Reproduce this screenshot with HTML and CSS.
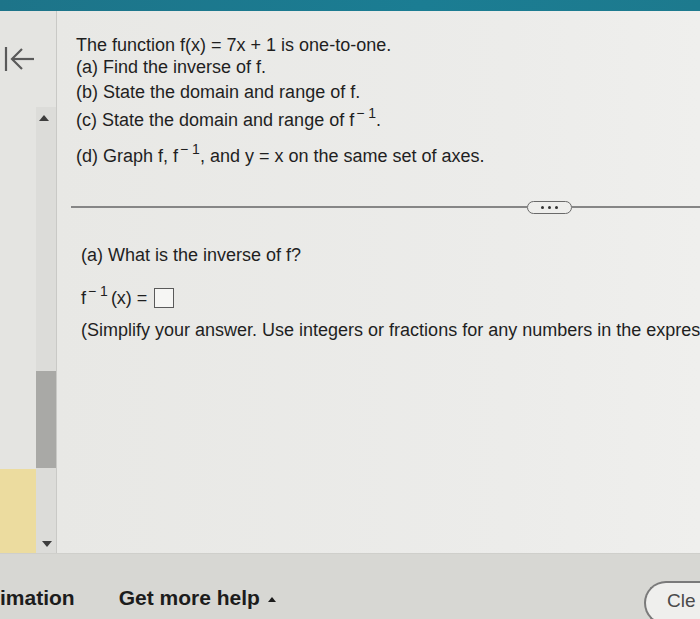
FILE: index.html
```html
<!DOCTYPE html>
<html>
<head>
<meta charset="utf-8">
<link rel="stylesheet" href="styles.css">
</head>
<body>
<div class="topbar"></div>
<div class="middle">
  <aside class="sidebar">
    <div class="side-col">
      <svg class="back-icon" width="32" height="28" viewBox="0 0 32 28">
        <line x1="3" y1="2" x2="3" y2="26" stroke="#5a5a5a" stroke-width="2.2"/>
        <line x1="9" y1="14" x2="31" y2="14" stroke="#5a5a5a" stroke-width="2.2"/>
        <polyline points="19,4 9,14 19,24" fill="none" stroke="#5a5a5a" stroke-width="2.2"/>
      </svg>
      <div class="side-spacer"></div>
      <div class="yellow"></div>
    </div>
    <div class="scroll">
      <div class="track">
        <div class="arrow-up"></div>
        <div class="thumb"></div>
        <div class="track-spacer"></div>
        <div class="arrow-down"></div>
      </div>
    </div>
  </aside>
  <main class="main">
    <div class="question">
      <div class="line">The function f(x) = 7x + 1 is one-to-one.</div>
      <div class="line">(a) Find the inverse of f.</div>
      <div class="line gap3">(b) State the domain and range of f.</div>
      <div class="line gap6">(c) State the domain and range of f<span class="sup">− 1</span>.</div>
      <div class="line gap14">(d) Graph f, f<span class="sup">− 1</span>, and y = x on the same set of axes.</div>
    </div>
    <div class="sep">
      <div class="sep-line left"></div>
      <div class="pill"><span></span><span></span><span></span></div>
      <div class="sep-line right"></div>
    </div>
    <div class="answer">
      <div class="line">(a) What is the inverse of f?</div>
      <div class="line eq">f<span class="sup">− 1</span>(x) = <span class="box"></span></div>
      <div class="line hint">(Simplify your answer. Use integers or fractions for any numbers in the express</div>
    </div>
  </main>
</div>
<div class="bottombar">
  <span class="bottom-link first">imation</span>
  <span class="bottom-link help">Get more help <span class="tri"></span></span>
  <span class="spacer"></span>
  <span class="clear-btn">Cle</span>
</div>
</body>
</html>
```

FILE: styles.css
```css
* { box-sizing: border-box; }
html, body {
  margin: 0;
  padding: 0;
  width: 700px;
  height: 619px;
  overflow: hidden;
}
body {
  display: flex;
  flex-direction: column;
  font-family: "Liberation Sans", Arial, sans-serif;
  color: #1f1f1f;
  background: #e9e9e6;
}
.topbar {
  height: 11px;
  flex: none;
  background: linear-gradient(90deg, #1d7489 0%, #1b7d93 60%, #1d7a8e 100%);
}
.middle {
  flex: 1;
  display: flex;
  min-height: 0;
}
.sidebar {
  width: 57px;
  flex: none;
  display: flex;
  background: #e4e4e1;
  border-right: 1px solid #c9c9c6;
}
.side-col {
  width: 36px;
  display: flex;
  flex-direction: column;
}
.back-icon {
  margin: 34px 0 0 3px;
  display: block;
}
.side-spacer { flex: 1; }
.yellow {
  height: 84px;
  background: #ecdc9f;
}
.scroll {
  width: 20px;
  display: flex;
  flex-direction: column;
  padding-top: 96px;
}
.track {
  flex: 1;
  display: flex;
  flex-direction: column;
  background: #dcdcd9;
  padding-bottom: 6px;
}
.arrow-up {
  width: 0;
  height: 0;
  margin: 8px 0 0 3px;
  border-left: 5px solid transparent;
  border-right: 5px solid transparent;
  border-bottom: 6px solid #3d3d3d;
}
.thumb {
  margin-top: 250px;
  height: 97px;
  background: #a9a9a6;
}
.track-spacer { flex: 1; }
.arrow-down {
  width: 0;
  height: 0;
  margin-left: 6px;
  border-left: 5px solid transparent;
  border-right: 5px solid transparent;
  border-top: 6px solid #3d3d3d;
}
.main {
  flex: 1;
  min-width: 0;
  overflow: hidden;
  background: linear-gradient(90deg, #e8e8e5 0%, #ececea 70%, #efefed 100%);
  font-size: 18px;
}
.question {
  padding: 23px 0 0 19px;
}
.line {
  line-height: 22px;
  white-space: nowrap;
}
.gap3 { margin-top: 3px; }
.gap6 { margin-top: 6px; }
.gap14 { margin-top: 14px; }
.sup {
  font-size: 14px;
  vertical-align: 8px;
  line-height: 0;
  margin-left: 2px;
}
.sep {
  margin-top: 33px;
  margin-left: 14px;
  height: 14px;
  display: flex;
  align-items: center;
}
.sep-line {
  height: 1.5px;
  background: #868686;
}
.sep-line.left { width: 456px; flex: none; }
.sep-line.right { flex: 1; }
.pill {
  width: 45px;
  height: 13px;
  border: 1.5px solid #6a6a6a;
  border-radius: 7px;
  display: flex;
  align-items: center;
  justify-content: center;
  gap: 4px;
  background: #eeeeec;
}
.pill span {
  width: 3px;
  height: 3px;
  background: #333;
  border-radius: 50%;
}
.answer {
  padding-left: 24px;
  margin-top: 30px;
}
.eq {
  margin-top: 21px;
}
.eq .sup { margin-right: 3px; }
.box {
  display: inline-block;
  vertical-align: -4px;
  width: 20px;
  height: 20px;
  margin-left: 2px;
  border: 1.5px solid #5a5a5a;
  background: #f6f6f4;
}
.hint { margin-top: 10px; }
.bottombar {
  height: 66px;
  flex: none;
  display: flex;
  align-items: flex-start;
  background: #d7d7d3;
  border-top: 1px solid #cfcfcb;
}
.bottom-link {
  font-weight: bold;
  font-size: 21px;
  color: #1c1c1c;
  margin-top: 32px;
  line-height: 24px;
}
.first { margin-left: 0; }
.help {
  margin-left: 44px;
  display: flex;
  align-items: center;
}
.tri {
  display: inline-block;
  width: 0;
  height: 0;
  margin-left: 8px;
  margin-top: 2px;
  border-left: 4px solid transparent;
  border-right: 4px solid transparent;
  border-bottom: 5px solid #1c1c1c;
}
.spacer { flex: 1; }
.clear-btn {
  flex: none;
  margin-top: 27px;
  height: 44px;
  width: 56px;
  padding: 0 0 0 21px;
  border: 2px solid #7a7a7a;
  border-right: none;
  border-radius: 22px 0 0 22px;
  background: #efefed;
  font-size: 19px;
  line-height: 36px;
  color: #4a4a4a;
  white-space: nowrap;
}
```
